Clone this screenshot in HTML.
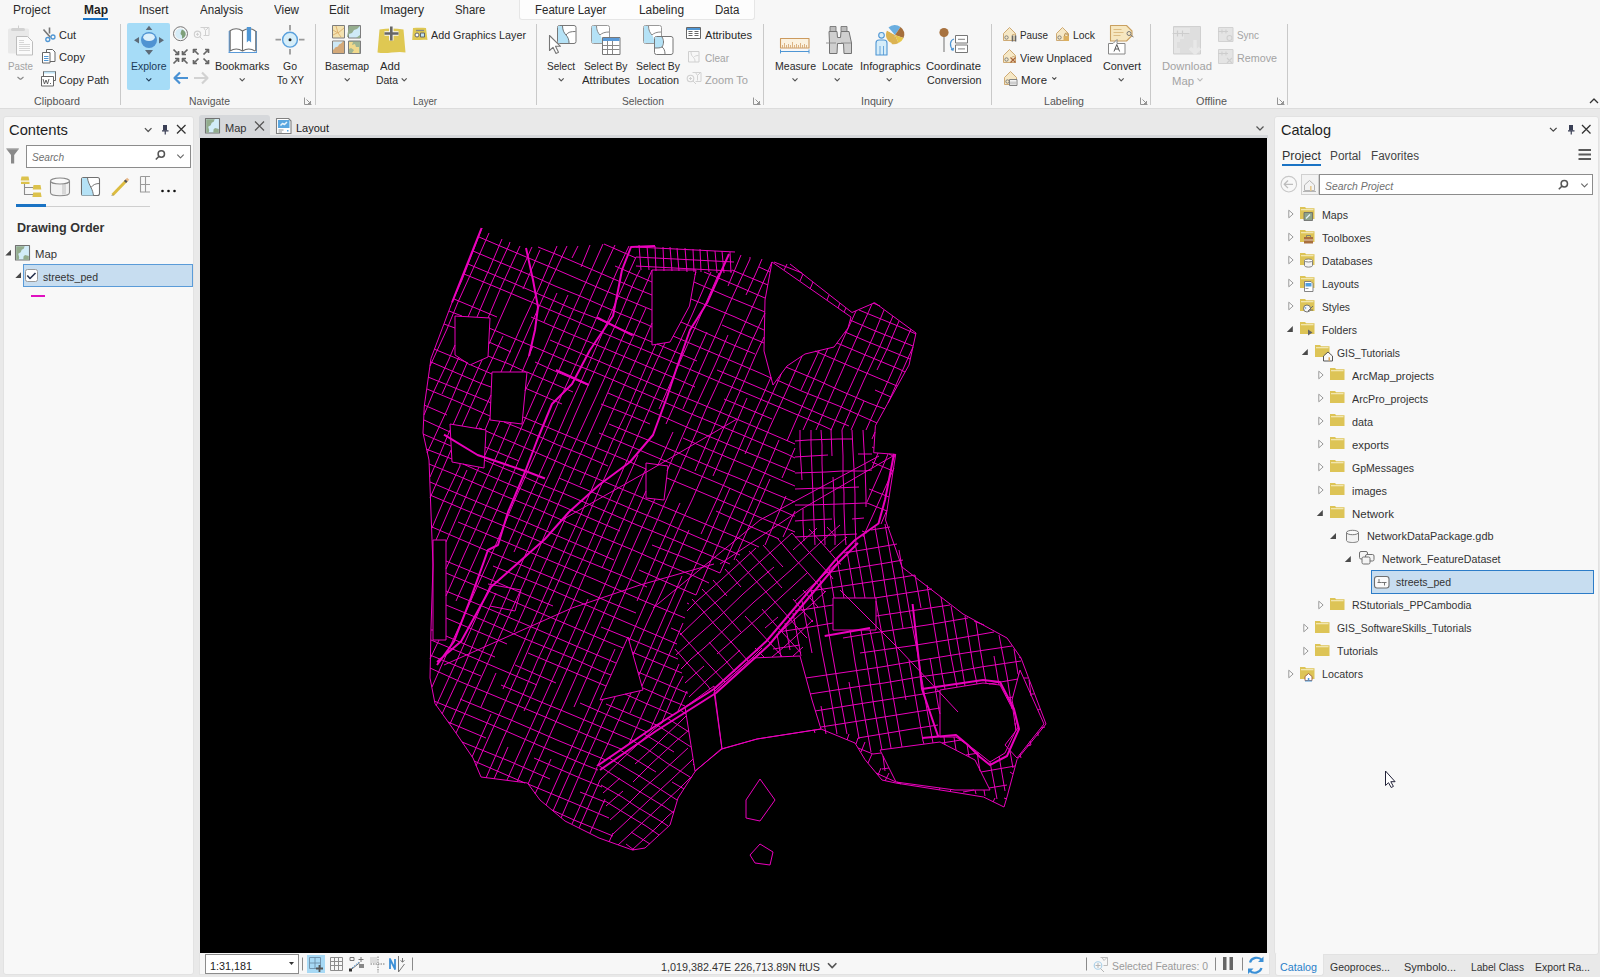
<!DOCTYPE html>
<html><head><meta charset="utf-8"><title>ArcGIS Pro</title>
<style>
html,body{margin:0;padding:0}
body{width:1600px;height:977px;overflow:hidden;position:relative;background:#e9e9e9;font-family:"Liberation Sans",sans-serif}
.a{position:absolute}
.t{position:absolute;white-space:nowrap;line-height:1;transform-origin:0 0}
svg{position:absolute;overflow:visible}
</style></head><body>
<div class="a" style="left:0;top:0;width:1600px;height:108px;background:#f7f7f7;border-bottom:1px solid #dcdcdc"></div>
<div class="a" style="left:519px;top:0;width:234px;height:19px;background:#fdfdfd;border:1px solid #e6e6e6;border-top:none;border-radius:0 0 3px 3px"></div>
<div class="a" style="left:83px;top:18px;width:25px;height:2px;background:#1a73c4"></div>
<div class="a" style="left:127px;top:23px;width:43px;height:67px;background:#a6dcf7;border-radius:2px"></div>
<!-- separators -->
<div class="a" style="left:120px;top:24px;width:1px;height:81px;background:#c9c9c9"></div>
<div class="a" style="left:315px;top:24px;width:1px;height:81px;background:#c9c9c9"></div>
<div class="a" style="left:536px;top:24px;width:1px;height:81px;background:#c9c9c9"></div>
<div class="a" style="left:763px;top:24px;width:1px;height:81px;background:#c9c9c9"></div>
<div class="a" style="left:991px;top:24px;width:1px;height:81px;background:#c9c9c9"></div>
<div class="a" style="left:1150px;top:24px;width:1px;height:81px;background:#c9c9c9"></div>
<div class="a" style="left:1287px;top:24px;width:1px;height:81px;background:#c9c9c9"></div>
<!-- contents pane -->
<div class="a" style="left:3px;top:116px;width:189px;height:857px;background:#f8f8f8;border:1px solid #e2e2e2;border-radius:3px"></div>
<div class="a" style="left:26px;top:145px;width:163px;height:21px;background:#fff;border:1px solid #8c8c8c"></div>
<div class="a" style="left:16px;top:204px;width:30px;height:3px;background:#1a73c4"></div>
<div class="a" style="left:46px;top:206px;width:104px;height:1px;background:#cfcfcf"></div>
<div class="a" style="left:23px;top:264px;width:168px;height:21px;background:#c7ddf0;border:1px solid #5a9bd8"></div>
<div class="a" style="left:31px;top:295px;width:14px;height:2px;background:#e010c0"></div>
<!-- map view -->
<div class="a" style="left:199px;top:115px;width:71px;height:21px;background:#d6d8db;border-radius:3px 3px 0 0"></div>
<div class="a" style="left:199px;top:135px;width:1069px;height:3px;background:#d6d8db"></div>
<div class="a" style="left:200px;top:138px;width:1067px;height:815px;background:#000"></div>
<svg class="a" style="left:200px;top:138px" width="1067" height="815" viewBox="0 0 1067 815">
<path d="M230 228L247 191M247 191L258 164M258 164L278 120M278 120L289 95M224 277L234 253M234 253L249 221M249 221L255 207M268 179L291 127M291 127L302 101M242 256L253 232M253 232L259 219M277 179L291 146M291 146L309 107M309 107L310 104M227 315L247 272M247 272L267 225M288 180L302 147M302 147L314 121M314 121L320 108M230 339L240 316M240 316L250 292M253 287L277 233M277 233L282 222M289 206L308 163M308 163L331 111M331 111L332 109M230 360L251 312M262 288L288 230M288 230L303 198M323 151L340 112M232 390L243 364M243 364L260 328M260 328L260 326M276 290L291 257M301 234L324 182M324 182L339 150M339 150L354 115M354 115L357 108M236 402L249 372M249 372L267 332M285 292L290 280M310 234L329 191M329 191L350 144M350 144L367 108M246 404L270 349M270 349L279 329M285 317L300 283M322 234L333 208M344 184L357 155M372 120L378 108M246 431L270 377M270 377L282 350M282 350L298 315M298 315L309 289M309 289L311 285M325 253L343 214M343 214L354 188M354 188L368 157M381 129L390 107M246 458L264 417M264 417L288 364M288 364L302 332M302 332L315 304M315 304L333 263M333 263L348 229M348 229L371 177M371 177L395 124M395 124L403 106M230 521L239 502M256 463L271 430M271 430L292 383M292 383L309 345M309 345L334 287M334 287L350 252M350 252L364 221M364 221L377 192M377 192L401 137M401 137L415 107M232 549L243 524M243 524L268 469M268 469L290 420M290 420L302 392M302 392L317 357M317 357L343 300M343 300L359 263M359 263L381 215M381 215L393 188M393 188L417 133M417 133L429 108M236 568L257 522M257 522L276 480M276 480L286 457M286 457L306 411M306 411L331 355M331 355L355 302M355 302L368 272M368 272L383 239M383 239L402 196M402 196L418 159M418 159L436 119M242 576L262 533M262 533L278 495M278 495L296 455M314 414L331 376M331 376L341 354M341 354L354 326M354 326L375 277M375 277L390 243M390 243L409 201M409 201L421 175M421 175L434 144M434 144L440 132M250 586L272 537M272 537L289 499M289 499L307 458M307 458L328 411M328 411L346 370M346 370L371 313M371 313L396 259M396 259L410 228M410 228L435 171M435 171L447 144M447 144L452 132M256 595L267 571M267 571L290 520M290 520L302 493M302 493L323 447M323 447L347 392M347 392L360 362M360 362L376 326M376 326L402 268M402 268L414 240M414 240L433 199M433 199L446 170M281 569L296 535M314 494L340 436M340 436L366 379M380 347L402 297M402 297L414 270M414 270L439 215M439 215L452 185M272 619L291 576M303 551L324 504M324 504L335 479M335 479L355 434M355 434L366 409M366 409L377 385M377 385L394 346M394 346L412 304M412 304L427 273M427 273L445 231M445 231L456 206M276 628L289 599M289 599L304 566M304 566L319 533M319 533L331 505M331 505L341 482M341 482L351 460M351 460L370 418M370 418L388 378M388 378L399 352M399 352L416 315M416 315L439 262M439 262L457 222M457 222L465 205M495 137L496 134M286 640L302 603M302 603L313 579M313 579L324 554M324 554L337 523M337 523L349 498M349 498L372 444M372 444L387 412M387 412L401 380M401 380L414 352M414 352L428 320M428 320L453 263M453 263L467 232M467 232L482 199M482 199L492 177M492 177L509 138M509 138L511 134M294 641L308 609M324 573L335 550M335 550L348 519M348 519L367 478M367 478L387 432M387 432L411 378M411 378L426 344M426 344L438 317M459 271L482 219M482 219L502 174M502 174L519 135M307 642L325 602M325 602L348 551M348 551L368 507M368 507L388 461M402 430L414 403M414 403L425 378M425 378L444 335M444 335L446 331M466 286L489 234M489 234L507 194M528 148L541 117M317 644L331 612M331 612L344 583M344 583L370 525M370 525L386 489M386 489L407 442M407 442L426 398M426 398L437 373M437 373L446 353M458 327L473 294M483 271L497 239M497 239L518 192M518 192L532 160M532 160L550 121M550 121L550 119M328 646L354 588M354 588L364 566M364 566L387 514M387 514L404 475M404 475L417 446M417 446L430 416M430 416L442 389M442 389L455 361M467 333L490 281M490 281L515 227M515 227L528 197M546 157L556 135M556 135L562 121M335 656L351 621M374 569L396 519M396 519L408 493M408 493L429 445M429 445L444 412M444 412L460 376M460 376L479 333M479 333L496 295M496 295L506 271M506 271L530 219M530 219L555 163M555 163L569 131M569 131L572 124M346 667L370 613M370 613L390 568M390 568L415 511M437 463L458 414M458 414L480 365M495 333L519 277M519 277L537 238M537 238L551 205M551 205L565 175M584 132L587 126M353 673L369 637M369 637L382 609M382 609L403 561M429 503L442 473M442 473L468 414M468 414L480 387M480 387L492 362M492 362L503 337M503 337L517 305M517 305L541 251M541 251L557 214M557 214L564 199M361 680L386 622M386 622L404 582M404 582L415 559M433 517L447 485M447 485L464 449M464 449L489 392M513 338L523 315M523 315L547 260M600 143L603 136M372 686L396 633M396 633L397 629M398 627L411 599M411 599L431 555M439 537L460 488M460 488L482 438M501 396L524 346M524 346L548 290M548 290L563 257M563 257L571 239M610 151L613 144M379 690L397 649M397 649L400 642M430 575L440 553M442 548L467 491M467 491L491 437M491 437L505 407M505 407L530 350M545 316L563 276M563 276L580 239M580 239L581 236M390 695L405 661M429 606L442 577M442 577L464 528M464 528L477 499M477 499L483 485M496 457L509 427M509 427L531 377M531 377L557 320M557 320L569 291M569 291L586 254M586 254L602 218M627 162L629 157M450 592L461 568M461 568L479 526M520 435L542 386M542 386L567 330M567 330L579 302M601 252L619 213M638 170L640 165M409 704L413 695M462 584L477 549M477 549L483 538M534 422L547 393M547 393L570 341M587 303L604 264M604 264L628 210M644 174L646 170M478 573L487 553M582 340L595 310M603 292L625 243M625 243L640 208M640 208L656 173M565 407L586 358M616 292L638 242M638 242L658 197M658 197L668 175M668 175L672 166M583 399L595 373M631 292L648 254M648 254L673 199M673 199L684 172M642 292L664 242M664 242L680 208M680 208L693 178M651 292L664 263M677 232L688 209M688 209L699 183M666 292L692 234M692 234L703 209M703 209L711 191M672 301L675 294M688 265L708 220M708 220L713 209M672 330L678 315M667 364L686 321M686 321L688 316M663 399L677 368M677 368L694 330M681 386L687 372M647 602L649 596M656 606L658 600M661 614L665 604M668 625L672 616M678 637L681 630M685 643L689 635M739 652L740 650M750 654L751 651M793 664L795 660M574 124L602 135M673 165L680 168M559 129L570 134M659 172L698 188M698 188L716 196M532 132L568 147M650 182L673 192M673 192L713 208M504 134L528 144M528 144L565 160M645 194L666 203M666 203L698 216M698 216L710 221M404 106L436 120M494 144L526 158M526 158L565 174M637 205L663 216M663 216L699 231M699 231L705 234M415 128L452 144M491 161L511 169M511 169L535 179M535 179L564 192M615 213L645 226M645 226L683 242M683 242L697 248M338 109L358 117M358 117L393 132M393 132L437 151M437 151L452 157M522 187L545 197M545 197L564 205M675 252L691 259M279 99L300 108M300 108L331 121M331 121L355 131M355 131L406 153M406 153L452 172M452 172L452 172M481 184L531 206M531 206L555 216M586 229L617 242M617 242L641 253M641 253L669 265M669 265L685 271M273 113L299 124M299 124L335 139M335 139L355 148M355 148L380 158M380 158L421 176M421 176L446 186M446 186L452 189M473 198L513 215M513 215L560 235M560 235L571 240M577 242L599 252M599 252L639 268M639 268L677 285M268 126L306 142M306 142L350 161M350 161L375 172M375 172L396 180M396 180L423 192M423 192L452 204M457 206L497 223M517 232L541 242M541 242L574 256M574 256L622 277M622 277L649 288M264 136L291 147M291 147L329 163M329 163L369 180M369 180L392 190M392 190L420 202M420 202L442 211M442 211L489 231M489 231L522 245M522 245L541 253M541 253L579 269M579 269L619 286M619 286L632 292M672 309L674 310M689 316L695 319M331 179L368 195M368 195L392 205M392 205L430 221M430 221L470 238M470 238L495 249M524 261L572 281M672 324L693 333M254 161L297 179M350 202L380 215M380 215L422 233M422 233L464 251M464 251L501 266M501 266L546 285M546 285L574 297M574 297L595 306M249 173L262 178M289 190L339 211M339 211L369 224M369 224L399 236M399 236L448 257M448 257L489 275M489 275L540 296M540 296L587 316M587 316L595 320M669 351L689 359M244 186L255 190M289 204L311 214M335 224L357 234M357 234L388 247M408 255L450 273M450 273L491 291M491 291L513 300M513 300L544 313M544 313L590 332M590 332L595 334M667 365L687 373M288 218L309 226M309 226L326 234M327 234L373 254M401 266L424 275M424 275L450 286M483 300L510 312M510 312L553 330M553 330L583 343M583 343L595 348M234 211L268 225M271 227L292 236M325 250L362 266M409 286L455 305M455 305L474 313M474 313L518 332M518 332L538 340M538 340L573 355M573 355L595 364M662 393L667 395M231 224L280 245M280 245L291 249M399 295L444 314M444 314L489 333M489 333L520 346M520 346L552 360M552 360L574 369M574 369L594 378M594 378L595 378M228 239L260 252M260 252L287 263M287 263L291 265M323 279L366 297M366 297L397 310M397 310L421 320M421 320L446 331M467 340L491 350M491 350L536 369M536 369L559 379M559 379L595 394M227 251L256 263M256 263L290 278M304 284L329 294M329 294L358 307M358 307L383 317M383 317L408 328M516 373L547 387M547 387L579 401M774 483L784 487M224 267L247 277M279 290L282 291M286 293L328 311M328 311L367 328M367 328L391 338M391 338L424 352M424 352L472 372M472 372L510 388M510 388L543 402M543 402L559 409M819 519L821 520M224 282L250 294M285 309L319 323M359 340L392 354M392 354L434 372M434 372L461 383M461 383L495 398M495 398L528 412M528 412L540 417M223 296L251 308M284 322L320 337M320 337L340 346M340 346L365 356M365 356L414 377M414 377L437 387M437 387L474 402M474 402L509 417M509 417L530 426M226 311L252 321M263 326L304 344M304 344L348 362M348 362L399 384M399 384L420 393M452 407L485 420M485 420L520 435M229 326L256 337M256 337L305 358M305 358L332 369M332 369L364 383M364 383L387 393M387 393L433 412M433 412L467 427M467 427L494 438M494 438L509 445M230 344L275 363M275 363L304 375M304 375L328 385M328 385L358 398M358 398L386 410M386 410L414 422M439 432L482 451M482 451L496 457M230 357L263 371M263 371L304 388M304 388L353 409M353 409L374 418M374 418L423 438M423 438L447 449M487 465L489 466M258 384L282 394M282 394L327 413M327 413L351 423M351 423L396 442M396 442L444 463M444 463L485 480M232 389L276 408M276 408L302 419M302 419L338 434M338 434L372 448M372 448L409 464M409 464L436 475M471 490L480 494M810 634L813 636M293 428L340 447M340 447L377 463M377 463L423 483M423 483L456 497M456 497L477 506M246 423L287 440M287 440L317 453M317 453L353 468M401 489L428 500M428 500L459 513M459 513L478 521M804 660L807 661M246 435L279 449M279 449L317 465M317 465L345 477M345 477L378 491M378 491L406 503M406 503L423 510M432 514L477 533M477 533L482 535M658 610L673 616M246 453L294 473M294 473L315 482M315 482L334 490M334 490L383 511M383 511L416 525M438 534L487 555M487 555L488 555M676 635L696 644M697 644L701 646M246 467L280 481M280 481L303 491M303 491L323 500M323 500L372 520M372 520L403 534M403 534L411 537M443 550L470 562M470 562L485 568M246 480L286 497M286 497L307 506M328 515L373 534M373 534L406 548M425 556L445 565M445 565L473 577M231 492L233 492M246 498L269 508M269 508L295 519M315 527L356 545M406 566L454 586M454 586L457 587M231 502L274 520M274 520L295 529M295 529L337 547M380 565L419 582M419 582L447 594M230 517L281 538M301 547L341 564M341 564L363 573M363 573L406 591M406 591L434 603M230 530L261 544M261 544L295 558M295 558L319 568M319 568L350 581M350 581L389 598M389 598L421 611M421 611L421 611M260 561L311 582M311 582L357 602M357 602L396 618M396 618L406 622M234 563L268 577M268 577L299 590M299 590L338 607M338 607L383 626M383 626L398 632M248 584L286 600M334 620L380 640M380 640L402 649M262 604L309 623M309 623L350 641M380 654L405 664M274 623L318 642M318 642L325 645M328 646L369 663M369 663L395 674M395 674L409 680M352 672L374 682M374 682L413 698M829 542L831 558M838 594L838 598M814 511L818 536M818 536L819 537M830 603L831 607M799 497L807 538M807 538L812 571M815 585L816 592M820 616L821 620M794 518L799 547M810 613L813 630M776 484L780 510M780 510L786 545M799 618L805 653M765 478L773 527M773 527L777 546M790 624L797 661M751 468L762 530M762 530L765 548M777 614L780 633M784 652L785 658M741 459L750 513M750 513L757 549M767 606L769 619M775 652L776 656M727 447L733 482M733 482L742 536M742 536L745 551M754 599L756 612M715 437L721 470M730 520L739 572M739 572L740 576M744 599L745 607M699 412L709 471M709 471L717 512M717 512L727 572M727 572L733 605M685 386L695 442M695 442L703 490M709 522L718 574M718 574L723 603M723 603L724 606M675 389L681 423M681 423L687 460M687 460L695 503M695 503L706 562M664 397L673 447M673 447L675 460M676 463L682 497M682 497L689 535M689 535L700 598M700 598L702 609M655 405L660 431M660 431L665 460M670 492L675 516M675 516L681 553M681 553L685 577M685 577L691 610M647 413L655 460M661 492L669 538M669 538L674 569M674 569L682 612M683 618L685 633M637 421L644 460M650 492L655 524M655 524L664 575M664 575L671 614M629 430L634 460M649 544L659 600M659 600L659 601M620 442L624 466M624 466L631 508M631 508L637 542M637 542L647 596M611 452L618 490M618 490L622 514M622 514L630 555M630 555L635 584M635 584L637 596M602 463L612 515M621 568L626 596M593 475L601 518M614 592L615 595M585 485L590 512M577 496L581 519M671 392L690 389M644 415L674 410M674 410L697 406M625 435L686 425M686 425L703 422M610 453L650 447M650 447L704 439M704 439L715 437M595 473L633 467M675 460L732 451M578 494L604 490M604 490L633 485M676 478L710 473M710 473L750 467M573 511L600 507M643 500L673 495M673 495L727 487M727 487L768 480M660 515L710 508M710 508L760 500M760 500L794 494M606 540L640 535M640 535L681 529M681 529L716 523M716 523L765 515M765 515L812 508M812 508L812 508M610 556L655 549M655 549L684 545M684 545L719 539M719 539L754 534M754 534L781 529M781 529L821 523M615 573L665 565M665 565L717 557M717 557L740 553M789 546L818 541M824 540L828 540M621 589L659 583M659 583L684 579M684 579L740 570M807 560L813 559M831 556L834 556M658 600L712 591M712 591L738 587M838 572L840 571M673 616L681 615M742 605L761 602M841 590L845 589M682 631L689 630M766 617L779 615M827 608L831 607M781 634L815 628M763 654L774 652M789 650L807 647M400 642L421 622M421 622L437 607M437 607L453 592M453 592L463 584M403 655L420 640M435 626L454 609M454 609L465 598M465 598L480 584M480 584L486 578M406 668L423 653M433 644L451 626M451 626L476 603M476 603L489 592M410 682L428 666M428 666L443 651M443 651L463 633M463 633L488 610M413 696L429 681M429 681L448 663M448 663L473 640M473 640L490 624M490 624L493 621M418 707L441 686M441 686L456 672M456 672L479 651M479 651L490 640M490 640L492 639M432 712L456 690M456 690L468 678M468 678L474 673M480 572L486 576M467 580L489 594M457 587L477 600M477 600L491 609M444 596L474 614M493 626L494 627M433 603L447 611M447 611L467 625M467 625L490 639M420 612L438 623M438 623L456 634M472 644L484 651M409 620L429 632M429 632L441 639M441 639L463 653M463 653L477 662M398 627L410 635M410 635L437 652M437 652L465 669M465 669L474 675M401 647L422 659M422 659L437 669M437 669L462 684M462 684L468 688M405 663L431 679M431 679L446 688M446 688L459 697M431 694L450 706M426 706L434 712M663 292L664 311M664 311L665 327M665 327L666 359M666 359L666 369M652 292L653 313M653 313L654 331M654 331L655 356M655 356L655 379M655 379L656 407M642 292L643 318M643 318L643 337M643 337L644 355M644 355L644 370M644 370L645 396M645 396L646 407M631 292L632 318M633 339L634 357M634 357L634 377M634 377L635 392M635 392L635 407M621 292L622 307M622 307L622 325M622 325L623 354M623 354L624 376M624 376L625 406M625 406L625 407M611 292L611 306M611 306L612 334M612 334L613 356M613 356L614 384M614 384L615 407M600 292L600 309M600 309L602 342M603 371L603 385M603 385L604 403M595 303L608 302M608 302L638 301M638 301L653 301M595 319L611 318M611 318L628 317M658 316L672 316M595 335L626 334M626 334L642 333M642 333L664 333M664 333L672 332M595 351L622 350M622 350L636 350M636 350L659 349M595 367L609 367M609 367L640 366M640 366L665 365M665 365L667 365M595 383L609 382M609 382L632 381M652 381L664 380M595 399L614 398M614 398L636 397M636 397L657 396M530 114L531 135M522 113L524 135M515 113L517 135M507 112L509 134M500 111L501 134M493 111L494 134M485 110L487 134M477 110L479 133M470 109L472 133M463 109L464 133M455 108L456 133M447 108L449 132M439 107L441 132M436 109L535 114M436 119L534 124M436 128L532 133M487 473L497 463M497 463L521 442M521 442L533 431M533 431L556 410M480 497L502 476M502 476L524 457M524 457L537 445M537 445L552 431M552 431L571 414M571 414L592 395M476 517L495 500M495 500L519 479M519 479L543 456M543 456L561 440M561 440L574 429M593 412L614 393M614 393L617 390M481 531L491 521M491 521L504 510M504 510L514 501M514 501L538 479M538 479L554 464M554 464L575 446M575 446L592 431M592 431L609 415M609 415L632 394M632 394L640 387M485 545L504 528M517 516L532 503M532 503L558 480M558 480L582 458M582 458L607 435M630 414L647 399M489 559L508 541M508 541L526 525M526 525L540 512M565 490L578 479M595 463L615 445M615 445L635 427M635 427L647 417M515 553L526 543M526 543L551 521M551 521L562 510M576 498L595 481M595 481L613 465M613 465L626 453M626 453L626 453M572 519L584 509M584 509L595 499M595 499L613 482M593 518L603 509M627 389L636 399M609 391L621 404M621 404L640 426M640 426L641 426M592 395L609 414M609 414L631 438M631 438L633 441M578 401L596 422M596 422L607 434M607 434L625 454M563 407L573 418M573 418L583 429M603 452L618 469M549 413L561 426M561 426L582 450M593 461L603 473M603 473L613 484M536 421L555 442M555 442L566 454M566 454L583 473M583 473L603 496M603 496L607 500M525 431L541 449M562 471L573 484M573 484L592 505M592 505L601 515M513 442L527 458M545 478L559 493M559 493L581 517M581 517L582 519M502 451L518 468M518 468L533 485M533 485L541 494M555 510L564 519M492 461L503 473M503 473L515 487M515 487L532 505M532 505L548 523M509 504L526 523M526 523L536 535M480 495L498 515M498 515L511 529M511 529L525 544M475 511L488 526M488 526L508 548M508 548L510 551" stroke="#ea00bc" stroke-width="1" fill="none" />
<path d="M590.0 126.0 L652.0 174.5 L674.7 164.7 L716.0 195.0 L709.0 227.0 L675.4 287.7 L673.7 314.7 L695.7 316.4 L685.5 382.0 L702.0 429.0 L763.0 476.0 L807.0 500.0 L821.0 520.0 L846.0 586.0 L817.0 621.6 L807.0 659.0 L804.0 669.0 L783.5 659.0 L753.0 654.0 L695.7 645.0 L682.0 642.0 L665.0 621.6 L655.0 605.0 L621.0 591.0 L557.0 601.0 L521.0 611.0 L495.4 633.0 L478.0 660.0 L470.0 687.0 L445.0 710.0 L432.5 712.0 L399.0 700.0 L365.0 683.0 L340.0 662.0 L327.5 645.0 L281.0 639.0 L273.0 620.0 L256.0 595.0 L235.0 565.5 L230.0 540.0 L231.0 490.0 L233.0 427.0 L229.0 322.0 L223.0 295.0 L224.3 268.0 L231.0 220.4 L252.0 164.5 L262.0 142.0 L282.0 90.0M452.0 132.0 L452.0 207.0 L470.0 204.0 L489.5 168.0 L496.0 132.0 L452.0 132.0ZM572.0 124.0 L565.0 162.0 L564.0 213.0 L573.0 247.0 L587.0 228.0 L605.0 216.0 L634.0 209.0 L648.0 190.0 L651.0 179.0 L572.0 124.0ZM514.0 554.0 L522.0 611.0 L557.0 601.0 L621.0 591.0 L612.0 562.0 L600.0 518.0 L552.0 520.0 L514.0 554.0ZM292.0 234.0 L290.0 282.0 L322.0 286.0 L327.0 234.0 L292.0 234.0ZM250.0 286.0 L252.0 324.0 L284.0 330.0 L286.0 292.0 L250.0 286.0ZM233.0 402.0 L233.0 502.0 L246.0 502.0 L246.0 402.0 L233.0 402.0ZM400.0 562.0 L443.0 552.0 L428.0 499.0 L400.0 562.0ZM740.0 552.0 L740.0 599.0 L756.0 599.0 L775.0 612.0 L790.0 624.0 L805.0 615.0 L816.0 592.0 L813.0 572.0 L800.0 547.0 L783.0 545.0 L740.0 552.0ZM820.0 532.0 L812.0 562.0 L818.0 590.0 L805.0 607.0 L817.0 620.0 L844.0 586.0 L820.0 532.0ZM680.0 612.0 L696.0 644.0 L755.0 652.0 L790.0 652.0 L775.0 622.0 L740.0 604.0 L680.0 612.0ZM446.0 325.0 L446.0 360.0 L464.0 362.0 L468.0 328.0 L446.0 325.0ZM255.0 178.0 L255.0 217.0 L270.0 227.0 L288.0 219.0 L290.0 180.0 L255.0 178.0ZM485.0 569.0 L495.0 633.0 L522.0 611.0 L514.0 548.0 L485.0 569.0ZM633.0 460.0 L633.0 492.0 L676.0 492.0 L676.0 460.0 L633.0 460.0ZM546.0 662.0 L560.0 641.0 L575.0 662.0 L560.0 683.0 L546.0 680.0ZM550.0 717.0 L560.0 706.0 L573.0 714.0 L570.0 727.0 L555.0 725.0ZM244.0 527.0 L300.0 502.0 L372.0 470.0 L440.0 447.0 L514.0 426.0M520.0 426.0 L600.0 372.0 L695.7 316.4M360.0 383.0 L450.0 332.0 L537.0 281.0M453.0 470.0 L560.0 382.0 L679.0 318.0M288.0 446.0 L321.0 452.0 L315.0 473.0 L290.0 468.0M640.0 452.0 L700.0 512.0 L758.0 574.0" stroke="#ea00bc" stroke-width="1" fill="none"/>
<path d="M397.0 628.0 L454.0 589.0 L514.0 551.0 L566.6 503.0 L635.4 422.0 L655.0 402.0 L678.5 385.5 L685.0 362.0 L694.0 316.0M400.0 632.0 L456.0 593.0 L516.0 555.0 L569.0 507.0 L638.0 425.0 L658.0 405.0M455.0 108.0 L431.0 109.0 L422.0 132.0 L413.0 178.0 L390.0 212.0 L372.0 246.0 L352.0 266.0 L338.0 300.0 L325.0 334.0 L308.0 374.0 L298.0 407.0 L288.0 412.0 L271.0 459.6 L254.0 503.5 L237.0 527.0M529.0 116.0 L507.0 165.0 L490.0 192.0 L477.0 229.0 L467.0 259.0 L453.0 297.0 L430.0 324.0 L399.0 347.0 L369.0 374.0 L345.0 401.0 L291.0 449.0 L261.0 503.5 L237.0 524.0M326.0 110.0 L333.0 142.0 L338.0 169.0 L335.0 192.0 L329.0 218.0M397.0 179.5 L432.7 197.4M356.0 232.0 L389.0 247.0M244.0 296.6 L277.6 317.0 L328.0 334.0 L345.0 340.5M281.6 90.0 L252.0 164.5M722.0 600.0 L756.0 597.0 L768.0 607.0 L780.0 619.0 L790.0 627.0 L807.0 618.0 L819.0 591.0 L814.0 571.0 L800.0 544.0 L783.0 542.0 L722.0 551.0M624.7 498.0 L670.0 490.0M712.6 466.0 L722.0 551.0 L738.0 598.0" stroke="#ea00bc" stroke-width="2" fill="none" stroke-linejoin="round"/>
</svg>
<div class="a" style="left:199px;top:953px;width:1069px;height:21px;background:#f7f7f7;border:1px solid #e2e2e2;border-top:none"></div>
<div class="a" style="left:205px;top:954px;width:92px;height:18px;background:#fff;border:1px solid #8c8c8c"></div>
<!-- catalog pane -->
<div class="a" style="left:1274px;top:116px;width:323px;height:837px;background:#f8f8f8;border:1px solid #e2e2e2;border-radius:3px"></div>
<div class="a" style="left:1282px;top:164px;width:39px;height:2px;background:#1a73c4"></div>
<div class="a" style="left:1301px;top:174px;width:18px;height:21px;background:#f3f3f3;border:1px solid #d0d0d0;box-sizing:border-box"></div>
<div class="a" style="left:1319px;top:174px;width:274px;height:21px;background:#fff;border:1px solid #8c8c8c;box-sizing:border-box"></div>
<div class="a" style="left:1371px;top:570px;width:221px;height:22px;background:#c7ddf0;border:1px solid #2c7cc8"></div>
<div class="a" style="left:1275px;top:954px;width:47px;height:21px;background:#f8f8f8;border:1px solid #e2e2e2;border-top:none;border-radius:0 0 3px 3px"></div>
<svg class="a" style="left:0;top:0" width="1600" height="977" viewBox="0 0 1600 977">
<g fill="none" stroke-linejoin="round">
<!-- Paste (disabled) -->
<rect x="8" y="28.5" width="21" height="25" rx="1.5" fill="#e9e9e9"/>
<rect x="11" y="28" width="14" height="3" rx="1.5" fill="#d2d2d2"/>
<path d="M18.5 25.5v3" stroke="#d0d0d0"/>
<path d="M16.5 36.5h11l5 5v13.5h-16z" fill="#fbfbfb" stroke="#bdbdbd"/>
<path d="M19 40.5h5M19 42.5h5M19 44.5h11M19 46.5h11M19 48.5h11M19 50.5h11" stroke="#d6d6d6"/>
<path d="M20.5 79.5l-3-2.5M20.5 79.5l3-2.5" stroke="#888" stroke-width="1.1"/>
<!-- Cut -->
<path d="M43.5 29.5l7 8M49.5 27.5v6" stroke="#777" stroke-width="1.6"/>
<circle cx="47.8" cy="39.5" r="2" stroke="#4f96d4" stroke-width="1.3"/>
<circle cx="53" cy="37" r="2" stroke="#4f96d4" stroke-width="1.3"/>
<!-- Copy -->
<path d="M46.5 49.5h6l2.5 2.5v9.5h-8.5z" fill="#fff" stroke="#666"/>
<path d="M42.5 52.5h7.5v10.5h-7.5z" fill="#fff" stroke="#666"/>
<path d="M44 56.5h4.5M44 58.5h4.5M44 60.5h4.5" stroke="#4f96d4"/>
<!-- Copy Path -->
<rect x="43.5" y="71.5" width="12" height="9" fill="#fff" stroke="#666"/>
<path d="M44 72.5h11" stroke="#bfe3f5" stroke-width="2"/>
<rect x="41.5" y="76.5" width="12" height="9.5" fill="#fff" stroke="#666"/>
<path d="M43 79l1.5 5 1.5-4 1.5 4 1.5-5M50 83.5h1" stroke="#555" stroke-width="0.9"/>
<!-- Explore -->
<path d="M149 25.7l3.3 4.3h-6.6z M149 55l-4-5h8z M134 40.3l5-3.3v6.6z M164 40.3l-5-3.3v6.6z" fill="#5d6b78"/>
<circle cx="149" cy="40" r="8" fill="#4f93d2"/>
<ellipse cx="149" cy="37.2" rx="5.8" ry="3.8" fill="#dcf0fb"/>
<path d="M146.3 78.3l2.5 2.5 2.5-2.5" stroke="#24405c" stroke-width="1.2"/>
<!-- Globe -->
<circle cx="180.5" cy="33.7" r="7" stroke="#777" stroke-width="1"/>
<circle cx="180.5" cy="33.7" r="5.3" fill="#d6ecf7"/>
<path d="M182 29.5c2 .5 3.7 2.5 3.7 4.5s-1.5 3.8-3.5 4.7c-.5-1.5.2-2.5-.5-3.5s-1.5-1-1-2.5.5-2 1.3-3.2z" fill="#7fa07a"/>
<!-- zoom to selection (disabled) -->
<circle cx="197.5" cy="34.3" r="3.2" stroke="#cfcfcf" stroke-width="1.1"/>
<path d="M199.8 36.8l3 3M196 34.3h3M197.5 32.8v3" stroke="#cfcfcf"/>
<path d="M200.5 27.5h8.5v8h-5.5M203.5 27.5l2 3 3-3M205.5 30.5v5" stroke="#d0d0d0"/>
<!-- fixed zoom in -->
<g stroke="#666" stroke-width="1.7">
<path d="M173.5 49.5l5 5M178.5 51v3.5h-3.5"/>
<path d="M187.5 49.5l-5 5M182.5 51v3.5h3.5"/>
<path d="M173.5 63.5l5-5M178.5 62v-3.5h-3.5"/>
<path d="M187.5 63.5l-5-5M182.5 62v-3.5h3.5"/>
<path d="M193.5 49.5l5 5M193.5 53v-3.5h3.5"/>
<path d="M208.5 49.5l-5 5M208.5 53v-3.5h-3.5"/>
<path d="M193.5 63.5l5-5M193.5 60v3.5h3.5"/>
<path d="M208.5 63.5l-5-5M208.5 60v3.5h-3.5"/>
</g>
<!-- back/forward -->
<path d="M188 78h-13M180 72.5l-5.5 5.5 5.5 5.5" stroke="#4a92d4" stroke-width="2.2"/>
<path d="M194 78h13M202 72.5l5.5 5.5-5.5 5.5" stroke="#d2d2d2" stroke-width="2.2"/>
<!-- Bookmarks -->
<path d="M229 31c4.5-3 9-3 13.5 0c4.5-3 9-3 13.5 0v21h-27z" fill="#fff"/>
<path d="M229.3 31v21.2M256.3 31v21.2M228.5 52.5h28.5" stroke="#5a9ad8" stroke-width="1.2"/>
<path d="M229.5 31c4.5-3 9-3 13 0c4.5-3 9-3 13 0M242.5 31v20.5M230 51c4-2.5 8.5-2.5 12.5 0c4-2.5 8.5-2.5 12.5 0M230.2 31v20M255.8 31v20" stroke="#6d6d6d" stroke-width="1.1"/>
<path d="M246.8 27h4.3v15.5l-2.15-2-2.15 2z" fill="#4f96d4"/>
<path d="M239.7 78.3l2.5 2.5 2.5-2.5" stroke="#555" stroke-width="1.2"/>
<!-- Go To XY -->
<path d="M290 25v5.5M290 49v5.5M275.5 39.7h5.5M299 39.7h5.5" stroke="#9a9a9a" stroke-width="1.8"/>
<circle cx="290" cy="39.7" r="7.4" fill="#d6eef9" stroke="#5aa0dc" stroke-width="1.4"/>
<circle cx="290" cy="39.7" r="1.5" fill="#222"/>
<!-- Basemap -->
<rect x="332.5" y="25.5" width="12" height="12.5" fill="#f3e2b0" stroke="#7d7d7d"/>
<path d="M333 30l5 3 6-5M336 26l2 7 3 4M333 35l4-2" stroke="#d9a866" stroke-width=".8"/>
<rect x="348.5" y="25.5" width="12" height="12.5" fill="#cfeaf7" stroke="#7d7d7d"/>
<path d="M349 26h11l-3 3-3 1-2 3-3 1-1 3h-1z" fill="#95ad8e"/><path d="M356 38l4-3v3z" fill="#95ad8e"/>
<rect x="332.5" y="41" width="12" height="12.5" fill="#d4a979" stroke="#7d7d7d"/>
<path d="M333 41.5h10l-2 2-2 1-1 2-3 1-1 2h-1z" fill="#cde8f6"/>
<rect x="348.5" y="41" width="12" height="12.5" fill="#9fb593" stroke="#7d7d7d"/>
<path d="M349 42h4l-1 3 3-1 1 3 3 0v6h-7l2-3-3-2-2 1z" fill="#f1d98c"/>
<path d="M344.7 78.3l2.5 2.5 2.5-2.5" stroke="#555" stroke-width="1.2"/>
<!-- Add Data -->
<path d="M379.5 29.5c8-1.5 16-1.5 24 0l2 23c-9-2-18 2-28 0z" fill="#dfc852"/>
<path d="M391.3 26.5v14M384.5 33.5h14" stroke="#f7f7f7" stroke-width="4.5"/>
<path d="M391.3 26.5v14M384.5 33.5h14" stroke="#666" stroke-width="2.6"/>
<path d="M401.7 78.3l2.5 2.5 2.5-2.5" stroke="#555" stroke-width="1.2"/>
<!-- Add Graphics Layer -->
<path d="M413 28c4.5-.5 9-.5 13 0l1.5 12c-5-.8-10 .5-15.3 0z" fill="#dfc852"/>
<path d="M416 30.5h8" stroke="#888" stroke-width="1.3"/>
<circle cx="417" cy="35" r="2" stroke="#666" fill="#fff"/>
<rect x="420.5" y="33" width="4" height="4" stroke="#666" fill="#bfe3f5"/>
<!-- Select -->
<rect x="557.5" y="25.5" width="18.5" height="18" rx="2" fill="#fff" stroke="#777"/>
<path d="M558 26h5c0 4 1.5 7 3.5 9s3 5 3 8h-11.5z" fill="#b5e2f6"/>
<path d="M562.5 26c0 4 1.5 7 3.5 9s3 5 3 8M566 35c2-3 5-3.5 9.5-3.5" stroke="#777"/>
<path d="M549.5 35.5v15l3.5-3.2 3 6.2 2.5-1.2-3-6h5z" fill="#fff" stroke="#777" stroke-width="1.1"/>
<path d="M558.7 78.3l2.5 2.5 2.5-2.5" stroke="#555" stroke-width="1.2"/>
<!-- Select By Attributes -->
<rect x="591.5" y="25.5" width="18" height="18" rx="2" fill="#fff" stroke="#999"/>
<path d="M592 26h4.5c0 4 1.5 7 3.5 9s2 5 2 8h-10z" fill="#b5e2f6"/>
<path d="M596.5 26c0 4 1.5 7 3.5 9M600 35c2-2 5-3 9-3" stroke="#888"/>
<rect x="602.5" y="37.5" width="17.5" height="17" fill="#fff" stroke="#777"/>
<rect x="603" y="38" width="16.5" height="3" fill="#5a9ad8"/>
<path d="M603 45.5h16.5M603 49.5h16.5M607.5 41v13M612.5 41v13" stroke="#888"/>
<!-- Select By Location -->
<rect x="643.5" y="25.5" width="18" height="18" rx="2" fill="#fff" stroke="#999"/>
<path d="M644 26h4.5c0 4 1.5 7 3.5 9s2 5 2 8h-10z" fill="#b5e2f6"/>
<path d="M648.5 26c0 4 1.5 7 3.5 9M652 35c2-2 5-3 9-3" stroke="#888"/>
<rect x="654.5" y="36.5" width="18.5" height="18" rx="2" fill="#fff" stroke="#777"/>
<path d="M655 37h7c2 3 2 7 0 10c-2 1-4 1-7 1z" fill="#b5e2f6"/>
<path d="M662 37c2 3 2 7 0 10c-2 1-4 1-7 1M662 47c2 1 3 4 3 7" stroke="#777"/>
<!-- Attributes small -->
<rect x="686.5" y="27.5" width="14" height="11" fill="#fff" stroke="#666"/>
<rect x="687" y="28" width="13" height="2" fill="#4f96d4"/>
<path d="M688.5 31.5h4M694.5 31.5h4M688.5 33.5h4M694.5 33.5h4M688.5 35.5h4M694.5 35.5h4" stroke="#666"/>
<!-- Clear (disabled) -->
<rect x="688.5" y="51.5" width="10.5" height="10.5" stroke="#cfcfcf"/>
<path d="M691 52c0 3 1 4 2.5 5.5s1.5 3 1.5 4.5M693.5 57.5c1-1.5 3-2 5-2" stroke="#d4d4d4"/>
<!-- Zoom To (disabled) -->
<circle cx="690.5" cy="78.5" r="3.3" stroke="#d0d0d0" stroke-width="1.1"/>
<path d="M693 81l3 3M689 78.5h3M690.5 77v3" stroke="#d0d0d0"/>
<path d="M692.5 72.5h8.5v9h-5.5M695.5 72.5l2 3 3-3M697.5 75.5v5" stroke="#d2d2d2"/>
<!-- Measure -->
<rect x="780.5" y="38.5" width="28.5" height="9.5" fill="#fbf2e0" stroke="#cc9a5e" stroke-width="1.1"/>
<path d="M782.5 48v-3M784.5 48v-5M786.5 48v-3M788.5 48v-4M790.5 48v-3M792.5 48v-6M794.5 48v-3M796.5 48v-4M798.5 48v-3M800.5 48v-5M802.5 48v-3M804.5 48v-4M806.5 48v-3" stroke="#d7ab78" stroke-width=".9"/>
<path d="M780.5 51.5h28.5M780.5 49.5v4M809 49.5v4" stroke="#4f96d4" stroke-width="1"/>
<path d="M792.5 78.3l2.5 2.5 2.5-2.5" stroke="#555" stroke-width="1.2"/>
<!-- Locate binoculars -->
<path d="M830 26.5h6v5h-6zM841 26.5h6v5h-6z" fill="#bdbdbd" stroke="#777" stroke-width=".9"/>
<path d="M829 31.5h8l.5 6h3l.5-6h8l2.5 11.5v10.5h-7.5l-.5-10h-6l-.5 10h-7.5v-10.5z" fill="#cfcfcf" stroke="#737373" stroke-width="1"/>
<path d="M826 43h10M841 43h10" stroke="#8a8a8a" stroke-width=".9"/>
<path d="M834.7 78.3l2.5 2.5 2.5-2.5" stroke="#555" stroke-width="1.2"/>
<!-- Infographics -->
<circle cx="881.5" cy="35.3" r="2.8" fill="#d6edf9" stroke="#4f96d4" stroke-width="1.1"/>
<path d="M876 55v-12c0-2 1-3 3-3h5c2 0 3 1 3 3v12z" fill="#d6edf9" stroke="#4f96d4" stroke-width="1.1"/>
<path d="M880 46v9M883.5 46v9" stroke="#4f96d4" stroke-width=".8"/>
<path d="M895 35l-8-4.5a9 9 0 0 0 6 13z" fill="#dcb352"/>
<path d="M895 35l-8-4.5a9 9 0 0 1 8.5-5z" fill="#f7f7f7"/>
<path d="M895 35l-6.5-7.5a9.5 9.5 0 0 1 12-.5z" fill="#6aaee0"/>
<path d="M895 35l5.5-8a9.5 9.5 0 0 1 3 11z" fill="#a56f3c"/>
<path d="M895 35l8.5 3a9.5 9.5 0 0 1-5 5z" fill="#e6c648"/>
<path d="M895 35l3.5 8a9.5 9.5 0 0 1-7 1z" fill="#dcb352"/>
<path d="M886.7 78.3l2.5 2.5 2.5-2.5" stroke="#555" stroke-width="1.2"/>
<!-- Coordinate Conversion -->
<path d="M944 36v16" stroke="#888" stroke-width="1.2"/>
<circle cx="944" cy="32.5" r="4.6" fill="#a8723f"/>
<rect x="955.5" y="35.5" width="12" height="7.5" fill="#fff" stroke="#777"/>
<rect x="955.5" y="45" width="12" height="7.5" fill="#fff" stroke="#777"/>
<path d="M958 39.3h7M958 48.8h7" stroke="#999" stroke-width="1.3"/>
<path d="M954 39c-4 1-5 7-1 11M951 49.5l2 .8.5-2.5" stroke="#4f96d4" stroke-width="1.2"/>
<!-- Labeling small tags -->
<g stroke="#c9a268" stroke-width=".9" fill="#f6e8c6">
<path d="M1003.5 40.5v-7l6-6 6 6v7z"/>
<path d="M1056.5 40.5v-7l6-6 6 6v7z"/>
<path d="M1003.5 62.5v-7l6-6 6 6v7z"/>
<path d="M1004.5 84.5v-7l6-6 6 6v7z"/>
</g>
<path d="M1012 35l3-1M1065 35l3-1M1012 57l3-1" stroke="#c9a268" stroke-width=".8"/>
<circle cx="1006.5" cy="37.5" r="1.7" stroke="#777" stroke-width=".9"/>
<circle cx="1059.5" cy="37.5" r="1.7" stroke="#777" stroke-width=".9"/>
<circle cx="1006.5" cy="59.5" r="1.7" stroke="#777" stroke-width=".9"/>
<circle cx="1007.5" cy="81.5" r="1.7" stroke="#777" stroke-width=".9"/>
<path d="M1012.5 35.5v6M1015.5 35.5v6" stroke="#666" stroke-width="1.6"/>
<rect x="1063.5" y="36" width="5.5" height="5" fill="#dcb060"/>
<path d="M1064.5 36v-1.5a1.8 1.8 0 0 1 3.5 0v1.5" stroke="#b08a4a" stroke-width=".9"/>
<path d="M1010.5 57.5l5 5M1015.5 57.5l-5 5" stroke="#a8643a" stroke-width="1.2"/>
<rect x="1009.5" y="79.5" width="7.5" height="6" fill="#f4f4f4" stroke="#777" stroke-width=".9"/>
<path d="M1011 81.5v3M1013 81.5v3M1015 81.5v3" stroke="#888" stroke-width=".7"/>
<path d="M1052.3 77.3l2 2 2-2" stroke="#444" stroke-width="1.1"/>
<!-- Convert -->
<path d="M1110.5 25.5h16l5.5 5.5v4.5l-5.5 5.5h-16z" fill="#f6e7c0" stroke="#c9a060" stroke-width="1.1"/>
<path d="M1113.5 29.5h8M1113.5 32.5h10M1113.5 35.5h7" stroke="#d9b77a" stroke-width=".9"/>
<circle cx="1129" cy="33.5" r="2" stroke="#777" stroke-width="1"/>
<path d="M1130.5 35l3 2" stroke="#777"/>
<path d="M1108.5 43.5h4.5l4-4v4h8v10.5h-16.5z" fill="#fff" stroke="#888" stroke-width="1"/>
<path d="M1114 51.5l2.8-7 2.8 7M1115 49h3.6" stroke="#555" stroke-width="1"/>
<path d="M1118.7 78.3l2.5 2.5 2.5-2.5" stroke="#555" stroke-width="1.2"/>
<!-- Download Map disabled -->
<rect x="1173.5" y="26.5" width="27" height="27.5" fill="#dedede" stroke="#d0d0d0"/>
<path d="M1174 28h16v6h-6v5h-4v3h-3v6h3v5h-6z" fill="#e6e6e6"/>
<path d="M1172.5 33.5h17M1177.5 30.5v6M1182.5 30.5v6" stroke="#cdcdcd" stroke-width="1.2"/>
<path d="M1195 40v13M1190 48l5 5 5-5" stroke="#e8e8e8" stroke-width="3.5"/>
<path d="M1197.5 78.3l2.5 2.5 2.5-2.5" stroke="#bbb" stroke-width="1.2"/>
<!-- Sync / Remove disabled -->
<rect x="1218.5" y="27.5" width="14.5" height="14" fill="#e4e4e4" stroke="#d2d2d2"/>
<path d="M1218 31.5h10M1222 29.5v4M1226 29.5v4" stroke="#cdcdcd"/>
<circle cx="1229.5" cy="38" r="2.5" stroke="#cfcfcf" stroke-width="1.1"/>
<rect x="1218.5" y="49.5" width="14.5" height="14" fill="#e4e4e4" stroke="#d2d2d2"/>
<path d="M1218 53.5h10M1222 51.5v4M1226 51.5v4" stroke="#cdcdcd"/>
<path d="M1227 58l5 5M1232 58l-5 5" stroke="#cfcfcf" stroke-width="1.1"/>
<!-- dialog launchers -->
<g stroke="#888" stroke-width=".9">
<path d="M304.5 97.5v7h7M306.5 99.5l4 4M308 103.5h2.5v-2.5"/>
<path d="M753.5 97.5v7h7M755.5 99.5l4 4M757 103.5h2.5v-2.5"/>
<path d="M1140.5 97.5v7h7M1142.5 99.5l4 4M1144 103.5h2.5v-2.5"/>
<path d="M1277.5 97.5v7h7M1279.5 99.5l4 4M1281 103.5h2.5v-2.5"/>
</g>
<path d="M1590 103l4-4 4 4" stroke="#333" stroke-width="1.3"/>
</g>
</svg>
<svg class="a" style="left:0;top:0" width="1600" height="977" viewBox="0 0 1600 977"><g fill="none" stroke-linejoin="round">
<path d="M144.89999999999998 128.15l3.3 3.3l3.3 -3.3" stroke="#555" stroke-width="1.3"/>
<path d="M163 125h4v5.5h-4z" fill="#3a3f55"/><path d="M162 130.8h6.5M165.25 131v3.5" stroke="#3a3f55" stroke-width="1.2"/>
<path d="M177 125L185.5 133.5M185.5 125L177 133.5" stroke="#333" stroke-width="1.3"/>
<path d="M6 148.5h13.2l-5 6.5v8.5h-3.2v-8.5z" fill="#8a8a8a"/><path d="M7 149h11" stroke="#b0b0b0" stroke-width="1"/>
<circle cx="161.3" cy="154" r="3.2" stroke="#555" stroke-width="1.5"/><path d="M159.10000000000002 156.2l-3.3 3.3" stroke="#555" stroke-width="1.6"/>
<path d="M177.3 154.70000000000002l3.2 3.2l3.2 -3.2" stroke="#666" stroke-width="1.1"/>
<path d="M21.5 176.5h7l.8 4h-8.6z M21 181.8h8.5v2.2h-8.5z M33.5 185h7l.8 4.5h-8.6z M33.2 192.5h7.6l.8 4.5h-9.2z" fill="#dcc24c"/>
<path d="M24.5 184v10.5h8.5M24.5 187.5h8.5" stroke="#8c8c8c" stroke-width="1.1"/>
<path d="M50.5 181v11.5c0 2 4.3 3.3 9.5 3.3s9.5-1.3 9.5-3.3v-11.5" fill="#f2f2f2" stroke="#8a8a8a" stroke-width="1.1"/><path d="M64 183.5v11" stroke="#d7d7d7" stroke-width="4"/><ellipse cx="60" cy="181" rx="9.5" ry="3" fill="#fafafa" stroke="#8a8a8a" stroke-width="1.1"/>
<rect x="81.5" y="177.5" width="18" height="18" rx="2" fill="#fff" stroke="#707070" stroke-width="1.1"/><path d="M82 178h5.5c.5 4 2 6.5 3.5 9.5s2 5 2.5 8h-11.5z" fill="#b5e2f6"/><path d="M87.5 178c.5 4 2 6.5 3.5 9.5s2 5 2.5 8M91 187.5c2-3 5-4 8.5-4" stroke="#666" stroke-width=".9"/>
<path d="M112.5 195l13.5-14" stroke="#dcbc40" stroke-width="3"/><path d="M126 181l2.2-2.2" stroke="#e8b888" stroke-width="3"/><path d="M125 182l1.5-1.5" stroke="#555" stroke-width="3"/><path d="M111.8 195.8l1.2-1.2" stroke="#777" stroke-width="1"/>
<path d="M140.5 176.5v15.5h9.5M140.5 176.5h9.5M145.5 176.5v15.5M140.5 184.5h9.5" stroke="#9a9a9a" stroke-width="1.1"/>
<circle cx="162.5" cy="191" r="1.3" fill="#111"/><circle cx="168.5" cy="191" r="1.3" fill="#111"/><circle cx="174.5" cy="191" r="1.3" fill="#111"/>
<path d="M5.3 255.5l5.7-5.8v5.8z M15.3 278l5.7-5.8v5.8z" fill="#4a4a4a"/>
<rect x="15.5" y="245.5" width="14" height="14.5" fill="#d2ecf8" stroke="#727272" stroke-width="1.1"/><path d="M16.2 246.2h8.5l-1 2.5-2 1-1 2.5-2.5 1.5 1 3.5-.5 2.5h-2.5z M23.5 256.5l1.5-1.5 2 .5 1.8.5v3.8h-5.5z" fill="#93ac8d"/>
<rect x="25.5" y="269.5" width="12" height="12" rx="2" fill="#fff" stroke="#9a9a9a"/><path d="M27.3 275.5l2.7 3l5.5-5.5" stroke="#2a3550" stroke-width="1.6"/>
<rect x="205.5" y="118.5" width="14" height="14.5" fill="#d2ecf8" stroke="#727272" stroke-width="1.1"/><path d="M206.2 119.2h8.5l-1 2.5-2 1-1 2.5-2.5 1.5 1 3.5-.5 2.5h-2.5z M213.5 129.5l1.5-1.5 2 .5 1.8.5v3.8h-5.5z" fill="#93ac8d"/>
<path d="M255 121.5L264 130.5M264 121.5L255 130.5" stroke="#555" stroke-width="1.2"/>
<path d="M276.5 118.5h12l2.5 2.5v12.5h-14.5z" fill="#fff" stroke="#808080" stroke-width="1.1"/><rect x="278" y="120" width="11.5" height="8" fill="#5aa7e0"/><path d="M280.5 125.5l2-2 2 1 2.5-2.5" stroke="#e8f4fb" stroke-width="1.5"/><path d="M278.5 130h5M278.5 132h3.5" stroke="#888" stroke-width=".9"/><rect x="287" y="130" width="1.5" height="1.5" fill="#5aa7e0"/>
<path d="M1256.5 126.5l3.5 3.5 3.5-3.5" stroke="#555" stroke-width="1.2"/>
<path d="M1550.0 127.85l3.3 3.3l3.3 -3.3" stroke="#444" stroke-width="1.3"/>
<path d="M1569 125h4v5.5h-4z" fill="#3a3f55"/><path d="M1568 130.8h6.5M1571.25 131v3.5" stroke="#3a3f55" stroke-width="1.2"/>
<path d="M1582 125L1590.5 133.5M1590.5 125L1582 133.5" stroke="#333" stroke-width="1.3"/>
<path d="M1578.5 150h12.5M1578.5 154.5h12.5M1578.5 159h12.5" stroke="#5a5a5a" stroke-width="1.8"/>
<circle cx="1288.8" cy="184.2" r="7.8" stroke="#c8c8c8" stroke-width="1.1"/><path d="M1293 184.3h-8M1288 180.5l-3.8 3.8 3.8 3.8" stroke="#bdbdbd" stroke-width="1.3"/>
<path d="M1304.5 190.5v-5.5l5-4.5 5 4.5v5.5zM1303 191.5h13" stroke="#b5b5b5" stroke-width="1"/><rect x="1310" y="186" width="1.6" height="5" fill="#e6c98f"/>
<circle cx="1564.3" cy="183.8" r="3.2" stroke="#555" stroke-width="1.5"/><path d="M1562.1 186.0l-3.3 3.3" stroke="#555" stroke-width="1.6"/>
<path d="M1581.3 183.70000000000002l3.2 3.2l3.2 -3.2" stroke="#666" stroke-width="1.1"/>
<path d="M1288.8 210.2v7.6l4.3-3.8z" fill="#fff" stroke="#9a9a9a" stroke-width="1"/>
<path d="M1300 207h5l1.2 1.2h8.3v10.8h-14.5z" fill="#ddc456"/><path d="M1301 209.7h12.5" stroke="#f6ecc0" stroke-width="1.1"/>
<rect x="1304" y="212.5" width="8.5" height="8" fill="#8ea48a" stroke="#666" stroke-width=".8"/><path d="M1306 218.5l4-4" stroke="#e8f4fb" stroke-width="1.3"/>
<path d="M1288.8 233.2v7.6l4.3-3.8z" fill="#fff" stroke="#9a9a9a" stroke-width="1"/>
<path d="M1300 230h5l1.2 1.2h8.3v10.8h-14.5z" fill="#ddc456"/><path d="M1301 232.7h12.5" stroke="#f6ecc0" stroke-width="1.1"/>
<rect x="1304" y="237" width="9" height="6.5" fill="#a9703e"/><path d="M1306.5 237v-1.5h4v1.5" stroke="#777" stroke-width=".9"/><path d="M1304 240h9" stroke="#f3e0c8" stroke-width=".9"/>
<path d="M1288.8 256.2v7.6l4.3-3.8z" fill="#fff" stroke="#9a9a9a" stroke-width="1"/>
<path d="M1300 253h5l1.2 1.2h8.3v10.8h-14.5z" fill="#ddc456"/><path d="M1301 255.7h12.5" stroke="#f6ecc0" stroke-width="1.1"/>
<path d="M1304.5 260.5v5c0 1 2 1.6 4 1.6s4-.6 4-1.6v-5" fill="#f4f4f4" stroke="#777" stroke-width=".9"/><ellipse cx="1308.5" cy="260.5" rx="4" ry="1.5" fill="#fff" stroke="#777" stroke-width=".9"/>
<path d="M1288.8 279.2v7.6l4.3-3.8z" fill="#fff" stroke="#9a9a9a" stroke-width="1"/>
<path d="M1300 276h5l1.2 1.2h8.3v10.8h-14.5z" fill="#ddc456"/><path d="M1301 278.7h12.5" stroke="#f6ecc0" stroke-width="1.1"/>
<path d="M1304.5 281.5h6.5l2 2v8h-8.5z" fill="#fff" stroke="#777" stroke-width=".9"/><rect x="1305.5" y="283" width="6" height="3.5" fill="#4f9ee0"/><path d="M1305.5 288.5h3" stroke="#888" stroke-width=".8"/>
<path d="M1288.8 302.2v7.6l4.3-3.8z" fill="#fff" stroke="#9a9a9a" stroke-width="1"/>
<path d="M1300 299h5l1.2 1.2h8.3v10.8h-14.5z" fill="#ddc456"/><path d="M1301 301.7h12.5" stroke="#f6ecc0" stroke-width="1.1"/>
<circle cx="1307" cy="308.5" r="3.5" stroke="#666" stroke-width=".9" fill="#f5f5f5"/><path d="M1308 311l5-5M1310 310h3" stroke="#666" stroke-width=".9"/><circle cx="1305.5" cy="308" r=".8" fill="#4f96d4"/>
<path d="M1286.8 332l6-6v6z" fill="#4a4a4a"/>
<path d="M1300 322h5l1.2 1.2h8.3v10.8h-14.5z" fill="#ddc456"/><path d="M1301 324.7h12.5" stroke="#f6ecc0" stroke-width="1.1"/>
<path d="M1308 329.5v6l4.5-3z" fill="#666"/>
<path d="M1301.8 355l6-6v6z" fill="#4a4a4a"/>
<path d="M1315 345h5l1.2 1.2h8.3v10.8h-14.5z" fill="#ddc456"/><path d="M1316 347.7h12.5" stroke="#f6ecc0" stroke-width="1.1"/>
<path d="M1323.5 361v-5l4.5-4 4.5 4v5z" fill="#f8f8f8" stroke="#555" stroke-width="1"/><rect x="1328.5" y="357.3" width="1.5" height="3.5" fill="#d8a55a"/>
<path d="M1318.8 371.2v7.6l4.3-3.8z" fill="#fff" stroke="#9a9a9a" stroke-width="1"/>
<path d="M1330 368h5l1.2 1.2h8.3v10.8h-14.5z" fill="#ddc456"/><path d="M1331 370.7h12.5" stroke="#f6ecc0" stroke-width="1.1"/>
<path d="M1318.8 394.2v7.6l4.3-3.8z" fill="#fff" stroke="#9a9a9a" stroke-width="1"/>
<path d="M1330 391h5l1.2 1.2h8.3v10.8h-14.5z" fill="#ddc456"/><path d="M1331 393.7h12.5" stroke="#f6ecc0" stroke-width="1.1"/>
<path d="M1318.8 417.2v7.6l4.3-3.8z" fill="#fff" stroke="#9a9a9a" stroke-width="1"/>
<path d="M1330 414h5l1.2 1.2h8.3v10.8h-14.5z" fill="#ddc456"/><path d="M1331 416.7h12.5" stroke="#f6ecc0" stroke-width="1.1"/>
<path d="M1318.8 440.2v7.6l4.3-3.8z" fill="#fff" stroke="#9a9a9a" stroke-width="1"/>
<path d="M1330 437h5l1.2 1.2h8.3v10.8h-14.5z" fill="#ddc456"/><path d="M1331 439.7h12.5" stroke="#f6ecc0" stroke-width="1.1"/>
<path d="M1318.8 463.2v7.6l4.3-3.8z" fill="#fff" stroke="#9a9a9a" stroke-width="1"/>
<path d="M1330 460h5l1.2 1.2h8.3v10.8h-14.5z" fill="#ddc456"/><path d="M1331 462.7h12.5" stroke="#f6ecc0" stroke-width="1.1"/>
<path d="M1318.8 486.2v7.6l4.3-3.8z" fill="#fff" stroke="#9a9a9a" stroke-width="1"/>
<path d="M1330 483h5l1.2 1.2h8.3v10.8h-14.5z" fill="#ddc456"/><path d="M1331 485.7h12.5" stroke="#f6ecc0" stroke-width="1.1"/>
<path d="M1316.8 516l6-6v6z" fill="#4a4a4a"/>
<path d="M1330 506h5l1.2 1.2h8.3v10.8h-14.5z" fill="#ddc456"/><path d="M1331 508.7h12.5" stroke="#f6ecc0" stroke-width="1.1"/>
<path d="M1330.0 539l6-6v6z" fill="#4a4a4a"/>
<path d="M1346.5 532.5v8c0 1.2 2.7 2 6 2s6-.8 6-2v-8" fill="#f2f2f2" stroke="#7a7a7a" stroke-width="1"/><ellipse cx="1352.5" cy="532.5" rx="6" ry="2.2" fill="#fafafa" stroke="#7a7a7a" stroke-width="1"/>
<path d="M1344.8 562l6-6v6z" fill="#4a4a4a"/>
<rect x="1359.5" y="551.5" width="8" height="7.5" rx="1.5" fill="#f4f4f4" stroke="#707070" stroke-width="1"/><rect x="1365.5" y="554.5" width="8.5" height="6.5" rx="1.5" fill="#f4f4f4" stroke="#707070" stroke-width="1"/><rect x="1362" y="557" width="8" height="7" rx="1.5" fill="#f4f4f4" stroke="#707070" stroke-width="1"/>
<rect x="1374.5" y="576.5" width="14.5" height="11.5" rx="2.5" fill="#fafafa" stroke="#6f6f6f" stroke-width="1.1"/><path d="M1377.5 582.5h4M1379 579v3.5M1381.5 582.5h5M1384.5 582.5v3" stroke="#666" stroke-width=".9"/>
<path d="M1318.8 601.2v7.6l4.3-3.8z" fill="#fff" stroke="#9a9a9a" stroke-width="1"/>
<path d="M1330 598h5l1.2 1.2h8.3v10.8h-14.5z" fill="#ddc456"/><path d="M1331 600.7h12.5" stroke="#f6ecc0" stroke-width="1.1"/>
<path d="M1303.8 624.2v7.6l4.3-3.8z" fill="#fff" stroke="#9a9a9a" stroke-width="1"/>
<path d="M1315 621h5l1.2 1.2h8.3v10.8h-14.5z" fill="#ddc456"/><path d="M1316 623.7h12.5" stroke="#f6ecc0" stroke-width="1.1"/>
<path d="M1303.8 647.2v7.6l4.3-3.8z" fill="#fff" stroke="#9a9a9a" stroke-width="1"/>
<path d="M1315 644h5l1.2 1.2h8.3v10.8h-14.5z" fill="#ddc456"/><path d="M1316 646.7h12.5" stroke="#f6ecc0" stroke-width="1.1"/>
<path d="M1288.8 670.2v7.6l4.3-3.8z" fill="#fff" stroke="#9a9a9a" stroke-width="1"/>
<path d="M1300 667h5l1.2 1.2h8.3v10.8h-14.5z" fill="#ddc456"/><path d="M1301 669.7h12.5" stroke="#f6ecc0" stroke-width="1.1"/>
<path d="M1305 680.5v-4l3.5-3 3.5 3v4z" fill="#fff" stroke="#9c5a3a" stroke-width=".9"/><path d="M1305 681h7" stroke="#4f96d4" stroke-width="1"/><rect x="1307.8" y="678" width="1.5" height="2.5" fill="#4f96d4"/>
<path d="M289 962h5l-2.5 3z" fill="#333"/>
<path d="M302.5 957.5v13M412.5 957.5v13M1086.5 957.5v13M1215.5 957.5v13M1242.5 957.5v13" stroke="#8a8a8a" stroke-width="1"/>
<rect x="307" y="955" width="18" height="18" fill="#a7d9f5"/><path d="M309.5 957.5h11v11h-11zM315 957.5v11M309.5 963h11" stroke="#6d8ea8" stroke-width=".9"/><path d="M319.5 965v7M316 968.5h7" stroke="#555" stroke-width="1.8"/>
<path d="M330.5 957.5h12v13h-12zM334.5 957.5v13M338.5 957.5v13M330.5 961.5h12M330.5 965.5h12" stroke="#8c8c8c" stroke-width="1"/>
<path d="M350 957.5h4v3h-4zM361 957v5M358.5 959.5h5M350 970.5l10-8" stroke="#777" stroke-width="1"/><path d="M352 968l7-6" stroke="#4f96d4" stroke-width="1" stroke-dasharray="1.5 1"/><rect x="359" y="964" width="5" height="4" fill="#888"/><rect x="349" y="968.5" width="3" height="3" fill="#333"/>
<path d="M378 956.5v16M370.5 964h15" stroke="#777" stroke-width="1" stroke-dasharray="1.5 1"/><rect x="370" y="957" width="7" height="6" fill="#dcdcdc"/>
<path d="M390 969v-10l5 10v-10" stroke="#3c8fd6" stroke-width="1.8"/><path d="M398.5 956v16M398.5 972l6-8M402.5 958v4l-2-1.5M402.5 962l2-1.5" stroke="#777" stroke-width="1"/>
<circle cx="1098" cy="965.5" r="3.8" stroke="#a8cfe8" stroke-width="1.1"/><path d="M1095.5 965.5h5M1098 963v5M1100.5 968.5l3.5 3.5" stroke="#b5b5b5" stroke-width="1"/><path d="M1100.5 957.5h7v8h-4M1102 957.5l2 3 3-3" stroke="#bdbdbd" stroke-width="1"/>
<rect x="1223" y="957" width="3.5" height="13" fill="#666"/><rect x="1229.5" y="957" width="3.5" height="13" fill="#666"/>
<path d="M1250 962.5a7 6.5 0 0 1 12-2.5M1261.5 968a7 6.5 0 0 1-12 2.5" stroke="#3a8fd6" stroke-width="2.2"/><path d="M1263.5 956.5v5.5h-5.5zM1248 974v-5.5h5.5z" fill="#3a8fd6"/>
<path d="M828 963.2l4.2 4.4 4.2-4.4" stroke="#555" stroke-width="1.6"/>
<path d="M1385.5 771v14.5l3-2.8 2.7 4.8 2.2-1.1-2.6-4.7h4.3z" fill="#fff" stroke="#222238" stroke-width="1"/>
</g></svg><span class="t" id="t0" style="left:12.70px;top:4.05px;font-size:12.5px;color:#2a2a2a;transform:scaleX(0.959);">Project</span>
<span class="t" id="t1" style="left:138.50px;top:4.05px;font-size:12.5px;color:#2a2a2a;transform:scaleX(0.944);">Insert</span>
<span class="t" id="t2" style="left:199.50px;top:4.05px;font-size:12.5px;color:#2a2a2a;transform:scaleX(0.924);">Analysis</span>
<span class="t" id="t3" style="left:274.00px;top:4.05px;font-size:12.5px;color:#2a2a2a;transform:scaleX(0.930);">View</span>
<span class="t" id="t4" style="left:329.30px;top:4.05px;font-size:12.5px;color:#2a2a2a;transform:scaleX(0.937);">Edit</span>
<span class="t" id="t5" style="left:380.00px;top:4.05px;font-size:12.5px;color:#2a2a2a;transform:scaleX(0.974);">Imagery</span>
<span class="t" id="t6" style="left:455.00px;top:4.05px;font-size:12.5px;color:#2a2a2a;transform:scaleX(0.908);">Share</span>
<span class="t" id="t7" style="left:535.40px;top:4.05px;font-size:12.5px;color:#2a2a2a;transform:scaleX(0.917);">Feature Layer</span>
<span class="t" id="t8" style="left:639.00px;top:4.05px;font-size:12.5px;color:#2a2a2a;transform:scaleX(0.952);">Labeling</span>
<span class="t" id="t9" style="left:715.00px;top:4.05px;font-size:12.5px;color:#2a2a2a;transform:scaleX(0.920);">Data</span>
<span class="t" id="t10" style="left:83.50px;top:4.05px;font-size:12.5px;color:#1f1f1f;font-weight:bold;transform:scaleX(0.960);">Map</span>
<span class="t" id="t11" style="left:8.00px;top:60.65px;font-size:11.8px;color:#a3a3a3;transform:scaleX(0.829);">Paste</span>
<span class="t" id="t12" style="left:59.00px;top:30.25px;font-size:11.8px;color:#2a2a2a;transform:scaleX(0.926);">Cut</span>
<span class="t" id="t13" style="left:59.00px;top:52.15px;font-size:11.8px;color:#2a2a2a;transform:scaleX(0.944);">Copy</span>
<span class="t" id="t14" style="left:59.00px;top:74.65px;font-size:11.8px;color:#2a2a2a;transform:scaleX(0.908);">Copy Path</span>
<span class="t" id="t15" style="left:34.00px;top:96.17px;font-size:11.2px;color:#555555;transform:scaleX(0.961);">Clipboard</span>
<span class="t" id="t16" style="left:130.60px;top:60.65px;font-size:11.8px;color:#1b3a57;transform:scaleX(0.887);">Explore</span>
<span class="t" id="t17" style="left:214.50px;top:60.65px;font-size:11.8px;color:#2a2a2a;transform:scaleX(0.923);">Bookmarks</span>
<span class="t" id="t18" style="left:283.00px;top:60.65px;font-size:11.8px;color:#2a2a2a;transform:scaleX(0.889);">Go</span>
<span class="t" id="t19" style="left:277.00px;top:74.65px;font-size:11.8px;color:#2a2a2a;transform:scaleX(0.858);">To XY</span>
<span class="t" id="t20" style="left:189.00px;top:96.17px;font-size:11.2px;color:#555555;transform:scaleX(0.929);">Navigate</span>
<span class="t" id="t21" style="left:325.00px;top:60.65px;font-size:11.8px;color:#2a2a2a;transform:scaleX(0.883);">Basemap</span>
<span class="t" id="t22" style="left:380.00px;top:60.65px;font-size:11.8px;color:#2a2a2a;transform:scaleX(0.952);">Add</span>
<span class="t" id="t23" style="left:376.00px;top:75.15px;font-size:11.8px;color:#2a2a2a;transform:scaleX(0.883);">Data</span>
<span class="t" id="t24" style="left:431.00px;top:30.15px;font-size:11.8px;color:#2a2a2a;transform:scaleX(0.911);">Add Graphics Layer</span>
<span class="t" id="t25" style="left:413.00px;top:96.17px;font-size:11.2px;color:#555555;transform:scaleX(0.857);">Layer</span>
<span class="t" id="t26" style="left:547.00px;top:60.65px;font-size:11.8px;color:#2a2a2a;transform:scaleX(0.854);">Select</span>
<span class="t" id="t27" style="left:583.50px;top:60.65px;font-size:11.8px;color:#2a2a2a;transform:scaleX(0.873);">Select By</span>
<span class="t" id="t28" style="left:581.50px;top:74.65px;font-size:11.8px;color:#2a2a2a;transform:scaleX(0.963);">Attributes</span>
<span class="t" id="t29" style="left:636.00px;top:60.65px;font-size:11.8px;color:#2a2a2a;transform:scaleX(0.883);">Select By</span>
<span class="t" id="t30" style="left:637.50px;top:74.65px;font-size:11.8px;color:#2a2a2a;transform:scaleX(0.919);">Location</span>
<span class="t" id="t31" style="left:705.00px;top:30.15px;font-size:11.8px;color:#2a2a2a;transform:scaleX(0.943);">Attributes</span>
<span class="t" id="t32" style="left:705.00px;top:52.65px;font-size:11.8px;color:#a3a3a3;transform:scaleX(0.851);">Clear</span>
<span class="t" id="t33" style="left:705.00px;top:74.65px;font-size:11.8px;color:#a3a3a3;transform:scaleX(0.941);">Zoom To</span>
<span class="t" id="t34" style="left:622.00px;top:96.17px;font-size:11.2px;color:#555555;transform:scaleX(0.912);">Selection</span>
<span class="t" id="t35" style="left:774.50px;top:60.65px;font-size:11.8px;color:#2a2a2a;transform:scaleX(0.893);">Measure</span>
<span class="t" id="t36" style="left:822.00px;top:60.65px;font-size:11.8px;color:#2a2a2a;transform:scaleX(0.875);">Locate</span>
<span class="t" id="t37" style="left:859.50px;top:60.65px;font-size:11.8px;color:#2a2a2a;transform:scaleX(0.941);">Infographics</span>
<span class="t" id="t38" style="left:926.00px;top:60.65px;font-size:11.8px;color:#2a2a2a;transform:scaleX(0.953);">Coordinate</span>
<span class="t" id="t39" style="left:926.50px;top:74.65px;font-size:11.8px;color:#2a2a2a;transform:scaleX(0.913);">Conversion</span>
<span class="t" id="t40" style="left:861.00px;top:96.17px;font-size:11.2px;color:#555555;transform:scaleX(0.953);">Inquiry</span>
<span class="t" id="t41" style="left:1020.00px;top:30.15px;font-size:11.8px;color:#2a2a2a;transform:scaleX(0.837);">Pause</span>
<span class="t" id="t42" style="left:1073.00px;top:30.15px;font-size:11.8px;color:#2a2a2a;transform:scaleX(0.883);">Lock</span>
<span class="t" id="t43" style="left:1020.00px;top:52.65px;font-size:11.8px;color:#2a2a2a;transform:scaleX(0.917);">View Unplaced</span>
<span class="t" id="t44" style="left:1021.00px;top:74.65px;font-size:11.8px;color:#2a2a2a;transform:scaleX(0.967);">More</span>
<span class="t" id="t45" style="left:1102.50px;top:60.65px;font-size:11.8px;color:#2a2a2a;transform:scaleX(0.920);">Convert</span>
<span class="t" id="t46" style="left:1044.00px;top:96.17px;font-size:11.2px;color:#555555;transform:scaleX(0.945);">Labeling</span>
<span class="t" id="t47" style="left:1161.50px;top:60.65px;font-size:11.8px;color:#a3a3a3;transform:scaleX(0.953);">Download</span>
<span class="t" id="t48" style="left:1172.00px;top:75.65px;font-size:11.8px;color:#a3a3a3;transform:scaleX(0.958);">Map</span>
<span class="t" id="t49" style="left:1237.00px;top:30.15px;font-size:11.8px;color:#a3a3a3;transform:scaleX(0.839);">Sync</span>
<span class="t" id="t50" style="left:1237.00px;top:52.65px;font-size:11.8px;color:#a3a3a3;transform:scaleX(0.910);">Remove</span>
<span class="t" id="t51" style="left:1196.00px;top:96.17px;font-size:11.2px;color:#555555;transform:scaleX(0.965);">Offline</span>
<span class="t" id="t52" style="left:8.50px;top:123.33px;font-size:14.5px;color:#1e1e1e;transform:scaleX(1.016);">Contents</span>
<span class="t" id="t53" style="left:32.00px;top:151.65px;font-size:11.8px;color:#707070;font-style:italic;transform:scaleX(0.856);">Search</span>
<span class="t" id="t54" style="left:16.50px;top:221.19px;font-size:13.5px;color:#333333;font-weight:bold;transform:scaleX(0.933);">Drawing Order</span>
<span class="t" id="t55" style="left:35.00px;top:248.65px;font-size:11.8px;color:#333;transform:scaleX(0.958);">Map</span>
<span class="t" id="t56" style="left:43.00px;top:271.65px;font-size:11.8px;color:#333;transform:scaleX(0.892);">streets_ped</span>
<span class="t" id="t57" style="left:224.50px;top:122.65px;font-size:11.8px;color:#333;transform:scaleX(0.937);">Map</span>
<span class="t" id="t58" style="left:296.00px;top:122.65px;font-size:11.8px;color:#222;transform:scaleX(0.932);">Layout</span>
<span class="t" id="t59" style="left:210.00px;top:961.15px;font-size:11.8px;color:#222;transform:scaleX(0.915);">1:31,181</span>
<span class="t" id="t60" style="left:661.00px;top:961.91px;font-size:11.5px;color:#333;transform:scaleX(0.938);">1,019,382.47E 226,713.89N ftUS</span>
<span class="t" id="t61" style="left:1112.00px;top:960.91px;font-size:11.5px;color:#9a9a9a;transform:scaleX(0.905);">Selected Features: 0</span>
<span class="t" id="t62" style="left:1281.00px;top:123.33px;font-size:14.5px;color:#1e1e1e;">Catalog</span>
<span class="t" id="t63" style="left:1282.00px;top:150.05px;font-size:12.5px;color:#333;">Project</span>
<span class="t" id="t64" style="left:1330.00px;top:150.05px;font-size:12.5px;color:#444;transform:scaleX(0.949);">Portal</span>
<span class="t" id="t65" style="left:1371.00px;top:150.05px;font-size:12.5px;color:#444;transform:scaleX(0.934);">Favorites</span>
<span class="t" id="t66" style="left:1325.00px;top:180.65px;font-size:11.8px;color:#707070;font-style:italic;transform:scaleX(0.879);">Search Project</span>
<span class="t" id="t67" style="left:1322.20px;top:210.15px;font-size:11.8px;color:#333;transform:scaleX(0.901);">Maps</span>
<span class="t" id="t68" style="left:1322.20px;top:233.10px;font-size:11.8px;color:#333;transform:scaleX(0.922);">Toolboxes</span>
<span class="t" id="t69" style="left:1322.20px;top:256.05px;font-size:11.8px;color:#333;transform:scaleX(0.897);">Databases</span>
<span class="t" id="t70" style="left:1322.20px;top:279.00px;font-size:11.8px;color:#333;transform:scaleX(0.895);">Layouts</span>
<span class="t" id="t71" style="left:1322.20px;top:301.95px;font-size:11.8px;color:#333;transform:scaleX(0.872);">Styles</span>
<span class="t" id="t72" style="left:1322.20px;top:324.90px;font-size:11.8px;color:#333;transform:scaleX(0.890);">Folders</span>
<span class="t" id="t73" style="left:1336.70px;top:347.85px;font-size:11.8px;color:#333;transform:scaleX(0.879);">GIS_Tutorials</span>
<span class="t" id="t74" style="left:1351.70px;top:370.80px;font-size:11.8px;color:#333;transform:scaleX(0.926);">ArcMap_projects</span>
<span class="t" id="t75" style="left:1351.70px;top:393.75px;font-size:11.8px;color:#333;transform:scaleX(0.906);">ArcPro_projects</span>
<span class="t" id="t76" style="left:1351.70px;top:416.70px;font-size:11.8px;color:#333;transform:scaleX(0.914);">data</span>
<span class="t" id="t77" style="left:1351.70px;top:439.65px;font-size:11.8px;color:#333;transform:scaleX(0.956);">exports</span>
<span class="t" id="t78" style="left:1351.70px;top:462.60px;font-size:11.8px;color:#333;transform:scaleX(0.892);">GpMessages</span>
<span class="t" id="t79" style="left:1351.70px;top:485.55px;font-size:11.8px;color:#333;transform:scaleX(0.920);">images</span>
<span class="t" id="t80" style="left:1351.70px;top:508.50px;font-size:11.8px;color:#333;transform:scaleX(0.971);">Network</span>
<span class="t" id="t81" style="left:1366.70px;top:531.45px;font-size:11.8px;color:#333;transform:scaleX(0.923);">NetworkDataPackage.gdb</span>
<span class="t" id="t82" style="left:1381.70px;top:554.40px;font-size:11.8px;color:#333;transform:scaleX(0.904);">Network_FeatureDataset</span>
<span class="t" id="t83" style="left:1396.20px;top:577.35px;font-size:11.8px;color:#333;transform:scaleX(0.892);">streets_ped</span>
<span class="t" id="t84" style="left:1351.70px;top:600.30px;font-size:11.8px;color:#333;transform:scaleX(0.893);">RStutorials_PPCambodia</span>
<span class="t" id="t85" style="left:1336.70px;top:623.25px;font-size:11.8px;color:#333;transform:scaleX(0.883);">GIS_SoftwareSkills_Tutorials</span>
<span class="t" id="t86" style="left:1336.70px;top:646.20px;font-size:11.8px;color:#333;transform:scaleX(0.915);">Tutorials</span>
<span class="t" id="t87" style="left:1322.20px;top:669.15px;font-size:11.8px;color:#333;transform:scaleX(0.906);">Locators</span>
<span class="t" id="t88" style="left:1280.00px;top:961.65px;font-size:11.8px;color:#2a7fc9;transform:scaleX(0.910);">Catalog</span>
<span class="t" id="t89" style="left:1330.00px;top:961.65px;font-size:11.8px;color:#333;transform:scaleX(0.888);">Geoproces...</span>
<span class="t" id="t90" style="left:1404.00px;top:961.65px;font-size:11.8px;color:#333;transform:scaleX(0.933);">Symbolo...</span>
<span class="t" id="t91" style="left:1471.00px;top:961.65px;font-size:11.8px;color:#333;transform:scaleX(0.860);">Label Class</span>
<span class="t" id="t92" style="left:1535.00px;top:961.65px;font-size:11.8px;color:#333;transform:scaleX(0.883);">Export Ra...</span></body></html>
